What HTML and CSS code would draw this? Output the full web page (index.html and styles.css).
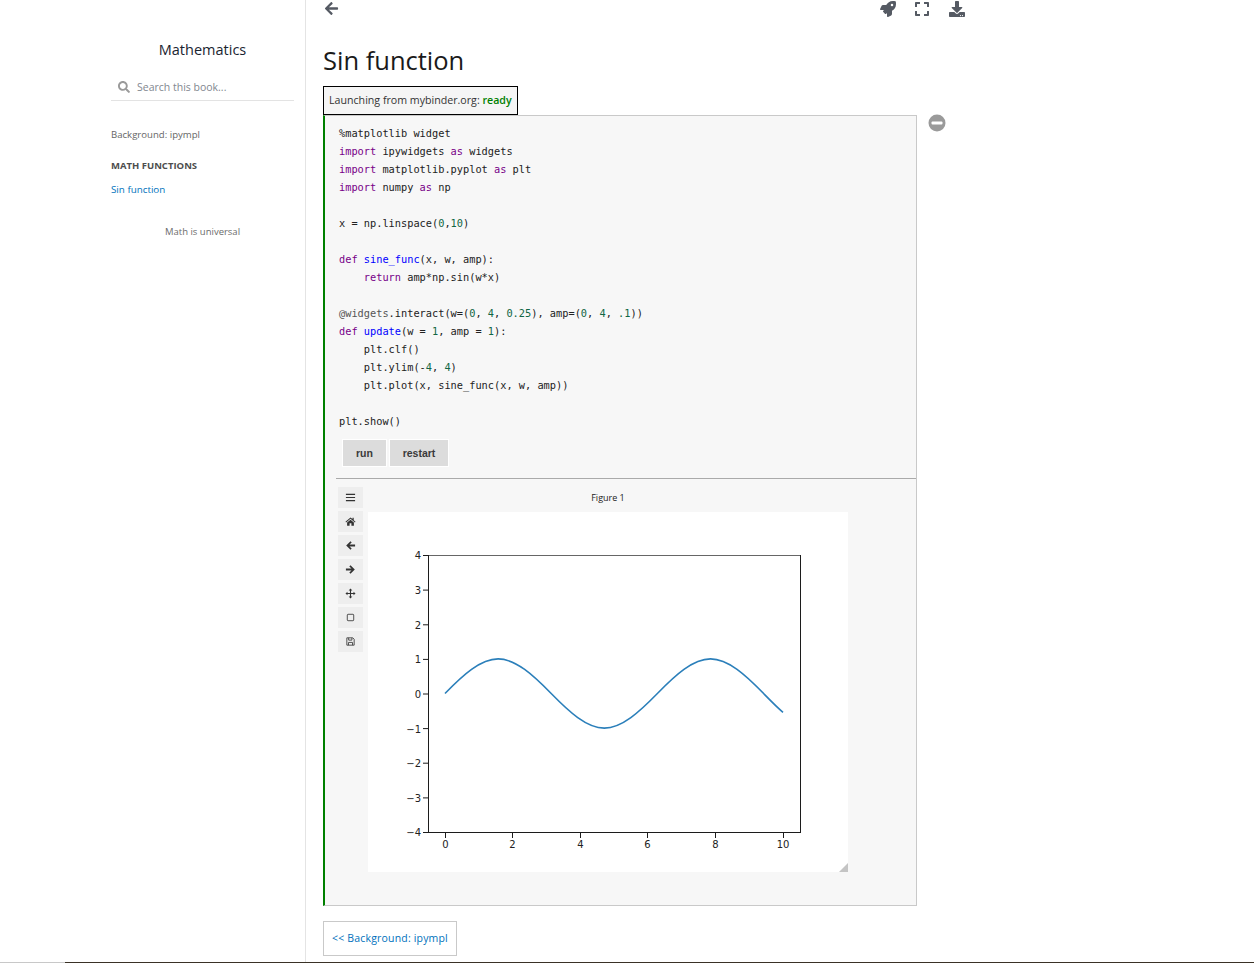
FILE: index.html
```html
<!DOCTYPE html>
<html lang="en">
<head>
<meta charset="utf-8">
<title>Sin function</title>
<link rel="stylesheet" href="styles.css">
</head>
<body>
<aside class="sidebar">
  <div class="book-title">Mathematics</div>
  <div class="search">
    <svg class="search-icon" viewBox="0 0 512 512"><path d="M505 442.7L405.3 343c-4.500-4.500-10.600-7-17-7H372c27.600-35.300 44-79.700 44-128C416 93.100 322.900 0 208 0S0 93.100 0 208s93.100 208 208 208c48.300 0 92.700-16.400 128-44v16.300c0 6.400 2.500 12.500 7 17l99.700 99.700c9.400 9.400 24.600 9.400 33.900 0l28.300-28.300c9.400-9.400 9.400-24.600.1-34zM208 336c-70.700 0-128-57.200-128-128 0-70.700 57.200-128 128-128 70.700 0 128 57.200 128 128 0 70.700-57.200 128-128 128z"/></svg>
    <span>Search this book...</span>
  </div>
  <a class="nav-link first">Background: ipympl</a>
  <div class="nav-caption">MATH FUNCTIONS</div>
  <a class="nav-link active">Sin function</a>
  <div class="side-footer">Math is universal</div>
</aside>
<main class="main">
  <div class="topbar">
    <svg class="top-icon back" viewBox="0 0 448 512"><path d="M257.500 445.100l-22.200 22.200c-9.400 9.400-24.600 9.400-33.900 0L7 273c-9.400-9.400-9.400-24.600 0-33.900L201.400 44.700c9.400-9.400 24.600-9.400 33.900 0l22.200 22.200c9.500 9.500 9.300 25-.4 34.300L136.600 216H424c13.300 0 24 10.700 24 24v32c0 13.300-10.700 24-24 24H136.600l120.500 114.800c9.800 9.300 10 24.800.4 34.300z"/></svg>
    <div class="top-actions">
      <svg class="top-icon" viewBox="0 0 512 512"><path d="M505.120 19.094c-1.189-5.531-6.658-11-12.207-12.188C460.716 0 435.507 0 410.407 0 307.175 0 245.269 55.203 199.052 128H94.838c-16.348.016-35.557 11.875-42.887 26.484L2.516 253.297A28.400 28.400 0 0 0 0 264a24.009 24.009 0 0 0 24.006 24h103.810l-22.475 22.469c-11.365 11.361-12.996 32.258 0 45.250l50.904 50.906c11.156 11.188 32.156 13.156 45.277 0l22.475-22.469V488a24.009 24.009 0 0 0 24.006 24 28.559 28.559 0 0 0 10.707-2.516l98.728-49.391c14.629-7.297 26.508-26.500 26.508-42.859V312.797c72.598-46.313 128.035-108.406 128.035-211.094C512.075 76.500 512.075 51.297 505.120 19.094zM384.040 168a40 40 0 1 1 40.010-40 40.023 40.023 0 0 1-40.010 40z"/></svg>
      <svg class="top-icon" viewBox="0 0 448 512"><path d="M0 180V56c0-13.300 10.700-24 24-24h124c6.600 0 12 5.400 12 12v40c0 6.600-5.400 12-12 12H64v84c0 6.600-5.400 12-12 12H12c-6.600 0-12-5.400-12-12zM288 44v40c0 6.600 5.400 12 12 12h84v84c0 6.600 5.400 12 12 12h40c6.600 0 12-5.400 12-12V56c0-13.300-10.700-24-24-24H300c-6.600 0-12 5.400-12 12zm148 276h-40c-6.600 0-12 5.400-12 12v84h-84c-6.600 0-12 5.400-12 12v40c0 6.600 5.400 12 12 12h124c13.300 0 24-10.700 24-24V332c0-6.600-5.400-12-12-12zM160 468v-40c0-6.600-5.400-12-12-12H64v-84c0-6.600-5.400-12-12-12H12c-6.600 0-12 5.400-12 12v124c0 13.300 10.700 24 24 24h124c6.600 0 12-5.400 12-12z"/></svg>
      <svg class="top-icon download" viewBox="0 0 512 512"><path d="M216 0h80c13.300 0 24 10.700 24 24v168h87.700c17.800 0 26.700 21.500 14.100 34.100L269.700 378.300c-7.500 7.500-19.800 7.500-27.300 0L90.100 226.100c-12.600-12.600-3.700-34.100 14.100-34.100H192V24c0-13.300 10.700-24 24-24zm296 376v112c0 13.300-10.700 24-24 24H24c-13.300 0-24-10.700-24-24V376c0-13.300 10.700-24 24-24h146.700l49 49c20.100 20.100 52.500 20.100 72.600 0l49-49H488c13.300 0 24 10.700 24 24zm-124 88c0-11-9-20-20-20s-20 9-20 20 9 20 20 20 20-9 20-20zm64 0c0-11-9-20-20-20s-20 9-20 20 9 20 20 20 20-9 20-20z"/></svg>
    </div>
  </div>
  <h1 class="page-title">Sin function</h1>
  <div class="binder-status">Launching from mybinder.org: <span class="ready">ready</span></div>
  <section class="cell">
    <svg class="collapse" viewBox="0 0 18 18"><circle cx="9" cy="9" r="8.500"/><rect x="3.500" y="7.500" width="11" height="3" rx="1" class="collapse-bar"/></svg>
<pre class="code"><span class="com">%matplotlib widget</span>
<span class="kw">import</span> ipywidgets <span class="kw">as</span> widgets
<span class="kw">import</span> matplotlib.pyplot <span class="kw">as</span> plt
<span class="kw">import</span> numpy <span class="kw">as</span> np

x = np.linspace(<span class="num">0</span>,<span class="num">10</span>)

<span class="kw">def</span> <span class="fn">sine_func</span>(x, w, amp):
    <span class="kw">return</span> amp*np.sin(w*x)

<span class="meta">@widgets</span>.interact(w=(<span class="num">0</span>, <span class="num">4</span>, <span class="num">0.25</span>), amp=(<span class="num">0</span>, <span class="num">4</span>, <span class="num">.1</span>))
<span class="kw">def</span> <span class="fn">update</span>(w = <span class="num">1</span>, amp = <span class="num">1</span>):
    plt.clf()
    plt.ylim(-<span class="num">4</span>, <span class="num">4</span>)
    plt.plot(x, sine_func(x, w, amp))

plt.show()</pre>
    <div class="cell-actions">
      <button class="cell-btn run">run</button>
      <button class="cell-btn restart">restart</button>
    </div>
    <div class="output">
      <div class="toolbar">
        <button class="tool"><svg viewBox="0 0 12 12"><path d="M1 2h10v1.300H1zM1 5.350h10v1.300H1zM1 8.700h10V10H1z"/></svg></button>
        <button class="tool"><svg viewBox="0 0 12 12"><path d="M6 1.500L.5 6.300l.7.700L6 3l4.800 4 .7-.7-2-1.800V2H8.200v1.300zM6 4L2.300 7v3.500h2.700V8h2v2.500h2.700V7z"/></svg></button>
        <button class="tool"><svg viewBox="0 0 12 12"><path d="M6 1.300L1.300 6 6 10.700l1.300-1.300-2.400-2.400H11V5H4.900l2.400-2.400z"/></svg></button>
        <button class="tool"><svg viewBox="0 0 12 12"><path d="M6 1.300L10.700 6 6 10.700 4.700 9.400 7.100 7H1V5h6.100L4.700 2.600z"/></svg></button>
        <button class="tool"><svg viewBox="0 0 12 12"><path d="M6 .5L8 2.700H6.600v2.700h2.700V4l2.200 2-2.200 2V6.600H6.600v2.700H8L6 11.500 4 9.300h1.400V6.600H2.700V8L.5 6l2.200-2v1.400h2.700V2.700H4z"/></svg></button>
        <button class="tool"><svg viewBox="0 0 12 12" class="outline"><rect x="2.500" y="2.500" width="7" height="7" rx=".8"/></svg></button>
        <button class="tool"><svg viewBox="0 0 12 12" class="outline"><path d="M2 2h6.500L10 3.500V10H2z"/><path d="M4 2v2.500h3.500V2M3.800 10V7h4.400v3"/></svg></button>
      </div>
      <div class="figure">
        <div class="figure-title">Figure 1</div>
        <div class="canvas">
          <svg class="plot" viewBox="368 512 480 360" width="480" height="360">
            <path class="spine top" d="M428 555.500H801"/>
            <path class="spine" d="M428.500 555v278M800.500 555v278M428 832.500H801"/>
            <path class="spine" d="M423 555.500h5M423 590.100h5M423 624.800h5M423 659.400h5M423 694h5M423 728.600h5M423 763.200h5M423 797.900h5M423 832.500h5"/>
            <path class="spine" d="M445.500 833v5M512.500 833v5M580.500 833v5M647.500 833v5M715.500 833v5M783.500 833v5"/>
            <path class="curve" d="M445 693.500C462.700 675.400 480.400 658.900 498.100 658.900C515.800 658.900 533.500 675.400 551.200 693.500C568.900 711.600 586.600 728.100 604.300 728.100C622 728.100 639.700 711.600 657.400 693.500C675.100 675.400 692.800 658.900 710.500 658.900C728.200 658.900 745.900 675.400 763.600 693.500C770.050 700.100 776.500 706.750 783 712.300"/>
            <g class="ylabels">
              <text x="421" y="559">4</text><text x="421" y="594">3</text><text x="421" y="628.500">2</text><text x="421" y="663">1</text><text x="421" y="698">0</text><text x="421" y="732.500">−1</text><text x="421" y="767">−2</text><text x="421" y="801.500">−3</text><text x="421" y="836">−4</text>
            </g>
            <g class="xlabels">
              <text x="445.500" y="848">0</text><text x="512.500" y="848">2</text><text x="580.500" y="848">4</text><text x="647.500" y="848">6</text><text x="715.500" y="848">8</text><text x="783" y="848">10</text>
            </g>
          </svg>
          <div class="resize-handle"></div>
        </div>
      </div>
    </div>
  </section>
  <a class="prev-link">&lt;&lt; Background: ipympl</a>
</main>
<div class="page-rule"></div>
</body>
</html>
```
FILE: styles.css
```css
* { box-sizing: border-box; }
html, body { margin: 0; height: 963px; overflow: hidden; background: #fff; }
body { display: flex; font-family: "Open Sans", "Noto Sans", sans-serif; color: #333; }

.sidebar {
  width: 306px;
  flex: none;
  height: 963px;
  padding: 40px 11px 0 111px;
  border-right: 1px solid #e4e4e4;
}
.book-title { height: 20px; line-height: 20px; font-size: 14.500px; text-align: center; color: #1a2430; }
.search {
  display: flex;
  align-items: center;
  gap: 7px;
  height: 31px;
  margin-top: 10px;
  padding: 3px 0 0 7px;
  border-bottom: 1px solid #e3e3e3;
  font-size: 10.500px;
  color: #828790;
}
.search-icon { width: 12px; height: 12px; fill: #9a9a9a; }
.nav-link { display: block; height: 14px; line-height: 14px; font-size: 9.600px; color: #666; }
.nav-link.first { margin-top: 27px; }
.nav-link.active { margin-top: 10px; font-size: 9.800px; color: #0071bc; }
.nav-caption { height: 14px; margin-top: 17px; line-height: 14px; font-size: 9.500px; font-weight: 700; color: #4d4d4d; }
.side-footer { margin-top: 28px; height: 14px; line-height: 14px; font-size: 9.500px; text-align: center; color: #6c6c6c; }

.main { flex: 1; padding-left: 17px; min-width: 0; }
.topbar { display: flex; justify-content: space-between; align-items: center; width: 642px; height: 17px; padding-left: 1px; }
.top-actions { display: flex; align-items: center; gap: 18px; }
.top-icon { width: 16px; height: 16px; fill: #555a63; display: block; }
.top-icon.back { width: 15px; height: 15px; }
.top-icon.download { margin-left: 1px; }
.page-title { height: 36px; margin: 25px 0 8px; line-height: 36px; font-size: 25.500px; font-weight: 400; color: #1a1a1a; }
.binder-status {
  width: 195px;
  height: 29px;
  line-height: 27px;
  padding-left: 5px;
  border: 1px solid #000;
  background: #f5f5f5;
  font-size: 10.650px;
  white-space: nowrap;
  color: #333;
}
.ready { color: #008000; font-weight: 600; }

.cell {
  position: relative;
  width: 594px;
  height: 791px;
  padding: 8px 0 0 14px;
  background: #f7f7f7;
  border: 1px solid #c9c9c9;
  border-left: 2px solid #008000;
}
.collapse { position: absolute; left: 603px; top: -2px; width: 18px; height: 18px; fill: #9a9a9a; }
.collapse-bar { fill: #fff; }
.code { margin: 0; font: 10.300px/18px "DejaVu Sans Mono", "Liberation Mono", monospace; color: #222; }
.kw { color: #770088; }
.fn { color: #0000ff; }
.num { color: #116644; }
.meta { color: #555; }
.com { color: #222; }

.cell-actions { display: flex; gap: 2px; margin: 9px 0 0 3px; }
.cell-btn {
  height: 28px;
  padding: 0;
  border: 1px solid #fff;
  background: #dcdcdc;
  font: 700 10.500px "Liberation Sans", Arial, sans-serif;
  color: #3a3a3a;
}
.run { width: 45px; }
.restart { width: 60px; }

.output { display: flex; gap: 5px; margin: 11px 0 0 -3px; padding-left: 2px; border-top: 1px solid #aaa; }
.toolbar { display: flex; flex-direction: column; gap: 3px; width: 25px; padding-top: 8px; }
.tool { display: flex; align-items: center; justify-content: center; width: 25px; height: 21px; padding: 0; border: 0; background: #eeeeee; }
.tool svg { width: 11px; height: 11px; fill: #333; }
.tool .outline { fill: none; stroke: #444; stroke-width: 1; }
.figure { width: 480px; }
.figure-title { height: 33px; line-height: 37px; text-align: center; font-size: 9px; color: #222; }
.canvas { position: relative; width: 480px; height: 360px; background: #fff; }
.plot { display: block; }
.spine { fill: none; stroke: #1c1c1c; stroke-width: 1; }
.spine.top { stroke: #666; }
.curve { fill: none; stroke: #2b7fba; stroke-width: 1.600; }
.plot text { font: 10px "DejaVu Sans", sans-serif; fill: #222; }
.ylabels text { text-anchor: end; }
.xlabels text { text-anchor: middle; }
.resize-handle { position: absolute; right: 0; bottom: 0; width: 9px; height: 9px; background: #c4c4c4; clip-path: polygon(100% 0, 100% 100%, 0 100%); }

.prev-link {
  display: block;
  width: 134px;
  height: 35px;
  margin-top: 15px;
  line-height: 33px;
  text-align: center;
  border: 1px solid #c9c9c9;
  font-size: 10.500px;
  letter-spacing: .18px;
  white-space: nowrap;
  color: #0071bc;
}

.page-rule { position: fixed; left: 0; right: 0; bottom: 0; height: 1px; background: linear-gradient(to right, #c8c8c8 65px, #3a3226 65px); }
```
